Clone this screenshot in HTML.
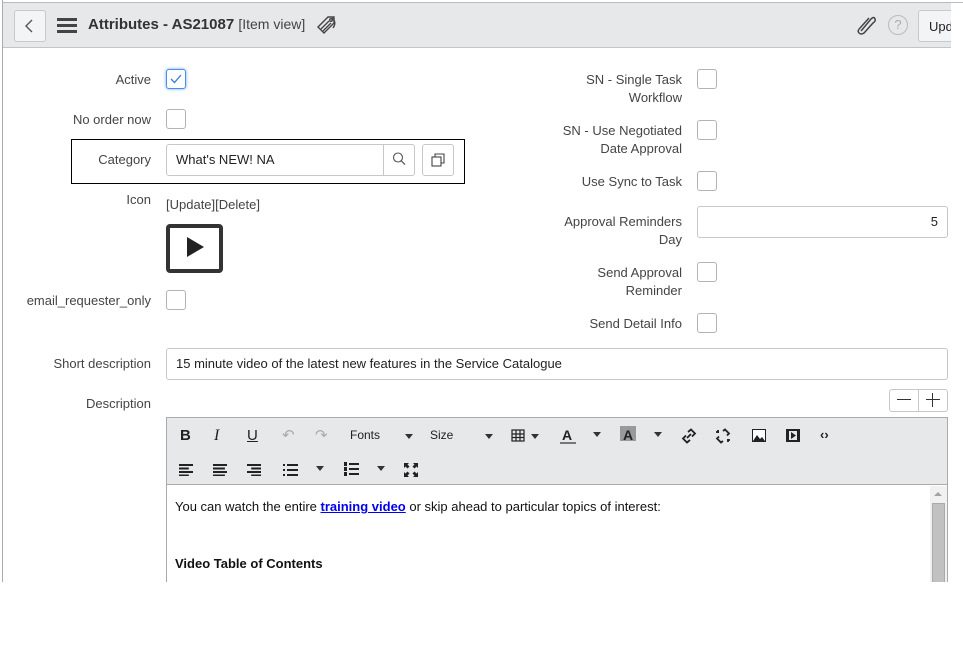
<!DOCTYPE html>
<html><head><meta charset="utf-8"><style>
*{box-sizing:border-box;margin:0;padding:0}
body{width:963px;height:650px;background:#fff;font-family:"Liberation Sans",sans-serif;font-size:13px;color:#333;position:relative;overflow:hidden}
.a{position:absolute}
.lbl{position:absolute;text-align:right;color:#444;font-size:13px;line-height:18px}
.cb{position:absolute;width:20px;height:20px;border:1px solid #b3b3b3;border-radius:3px;background:#fff}
.inp{position:absolute;border:1px solid #c7c7c7;border-radius:3px;background:#fff;color:#222;font-size:13px}
.tb{position:absolute;font-size:13px;color:#222}
.caret{position:absolute;width:0;height:0;border-left:4px solid transparent;border-right:4px solid transparent;border-top:5px solid #333}
.bar{position:absolute;background:#222;height:2px}
</style></head><body>
<!-- frame -->
<div class="a" style="left:2px;top:0;width:1px;height:582px;background:#aaa"></div>
<div class="a" style="left:2px;top:2px;width:961px;height:1px;background:#bbb"></div>
<!-- header -->
<div class="a" style="left:3px;top:3px;width:960px;height:45px;background:#e6e8ea;border-bottom:1px solid #c4c4c4"></div>
<div class="a" style="left:14px;top:10px;width:32px;height:32px;background:#f3f4f5;border:1px solid #c9c9c9;border-radius:3px"></div>
<svg class="a" style="left:22px;top:17px" width="16" height="18"><path d="M10 3 L4 9 L10 15" fill="none" stroke="#555" stroke-width="1.4"/></svg>
<div class="a" style="left:57px;top:18px;width:20px;height:3px;background:#444"></div>
<div class="a" style="left:57px;top:24px;width:20px;height:3px;background:#444"></div>
<div class="a" style="left:57px;top:30px;width:20px;height:3px;background:#444"></div>
<div class="a" style="left:88px;top:16px;font-size:15px;color:#333;white-space:nowrap"><b>Attributes - AS21087</b> <span style="font-size:14px;color:#444">[Item view]</span></div>
<svg class="a" style="left:315px;top:14px" width="24" height="24"><g fill="none" stroke="#444" stroke-width="1.4"><path d="M3 13 L13 3 L19 3 L19 9 L9 19 Z"/><path d="M6 15 L14 7 M8 17 L16 9"/><circle cx="16" cy="6" r="1.3"/><path d="M17 4 Q22 8 18 14"/></g></svg>
<svg class="a" style="left:855px;top:14px" width="22" height="22"><path d="M6 17 L16 5 Q19 2 20 5 Q21 7 18 9 L9 19 Q6 21 4 19 Q2 17 5 14 L14 4" fill="none" stroke="#444" stroke-width="1.5"/></svg>
<div class="a" style="left:888px;top:15px;width:20px;height:20px;border:1px solid #bbb;border-radius:50%;color:#aaa;font-size:13px;text-align:center;line-height:18px">?</div>
<div class="a" style="left:918px;top:10px;width:40px;height:32px;background:#f3f4f5;border:1px solid #c9c9c9;border-radius:3px;padding:8px 0 0 10px;font-size:13px;color:#222">Upd</div>
<div class="a" style="left:951px;top:3px;width:12px;height:46px;background:#fff"></div>

<!-- left column -->
<div class="lbl" style="right:812px;top:71px">Active</div>
<div class="cb" style="left:166px;top:69px;border-color:#4a90e2;box-shadow:0 0 3px #6aa6ff"></div>
<svg class="a" style="left:169px;top:72px" width="14" height="14"><path d="M2 7 L5.5 10.5 L12 3" fill="none" stroke="#3a7bd5" stroke-width="1.3"/></svg>
<div class="lbl" style="right:812px;top:111px">No order now</div>
<div class="cb" style="left:166px;top:109px"></div>
<div class="a" style="left:71px;top:139px;width:394px;height:45px;border:1px solid #000"></div>
<div class="lbl" style="right:812px;top:151px">Category</div>
<div class="inp" style="left:166px;top:144px;width:249px;height:32px;padding:7px 9px">What's NEW! NA</div>
<div class="a" style="left:383px;top:145px;width:1px;height:30px;background:#c7c7c7"></div>
<svg class="a" style="left:391px;top:151px" width="16" height="16"><circle cx="7" cy="6.5" r="4.5" fill="none" stroke="#555" stroke-width="1.1"/><path d="M10.2 9.8 L14 13.6" stroke="#555" stroke-width="1.2"/></svg>
<div class="inp" style="left:422px;top:144px;width:32px;height:32px"></div>
<svg class="a" style="left:430px;top:152px" width="16" height="16"><rect x="2" y="5" width="9" height="9" fill="none" stroke="#444" stroke-width="1.1"/><path d="M5 5 V2 H14 V11 H11" fill="none" stroke="#444" stroke-width="1.1"/></svg>
<div class="lbl" style="right:812px;top:191px">Icon</div>
<div class="a" style="left:166px;top:197px;color:#444">[Update][Delete]</div>
<div class="a" style="left:166px;top:224px;width:57px;height:49px;border:4px solid #333;border-radius:4px"></div>
<div class="a" style="left:187px;top:237px;width:0;height:0;border-top:10px solid transparent;border-bottom:10px solid transparent;border-left:17px solid #222"></div>
<div class="lbl" style="right:812px;top:292px">email_requester_only</div>
<div class="cb" style="left:166px;top:290px"></div>

<!-- right column -->
<div class="lbl" style="right:281px;top:71px">SN - Single Task<br>Workflow</div>
<div class="cb" style="left:697px;top:69px"></div>
<div class="lbl" style="right:281px;top:122px">SN - Use Negotiated<br>Date Approval</div>
<div class="cb" style="left:697px;top:120px"></div>
<div class="lbl" style="right:281px;top:173px">Use Sync to Task</div>
<div class="cb" style="left:697px;top:171px"></div>
<div class="lbl" style="right:281px;top:213px">Approval Reminders<br>Day</div>
<div class="inp" style="left:697px;top:206px;width:251px;height:32px;text-align:right;padding:7px 9px">5</div>
<div class="lbl" style="right:281px;top:264px">Send Approval<br>Reminder</div>
<div class="cb" style="left:697px;top:262px"></div>
<div class="lbl" style="right:281px;top:315px">Send Detail Info</div>
<div class="cb" style="left:697px;top:313px"></div>

<!-- short desc -->
<div class="lbl" style="right:812px;top:355px">Short description</div>
<div class="inp" style="left:166px;top:348px;width:782px;height:32px;padding:7px 9px">15 minute video of the latest new features in the Service Catalogue</div>
<div class="lbl" style="right:812px;top:395px">Description</div>
<div class="inp" style="left:889px;top:389px;width:59px;height:23px"></div>
<div class="a" style="left:918px;top:390px;width:1px;height:21px;background:#c7c7c7"></div>
<div class="a" style="left:897px;top:399px;width:14px;height:1px;background:#333"></div>
<div class="a" style="left:926px;top:399px;width:14px;height:1px;background:#333"></div>
<div class="a" style="left:932px;top:393px;width:1px;height:14px;background:#333"></div>

<!-- editor -->
<div class="a" style="left:166px;top:417px;width:782px;height:170px;border:1px solid #aaa;background:#fff"></div>
<div class="a" style="left:167px;top:418px;width:780px;height:67px;background:#e6e8ea;border-bottom:1px solid #aaa"></div>
<div class="tb" style="left:180px;top:427px;font-weight:bold;font-size:15px">B</div>
<div class="tb" style="left:214px;top:427px;font-style:italic;font-size:16px;font-family:'Liberation Serif',serif">I</div>
<div class="tb" style="left:247px;top:427px;text-decoration:underline;font-size:15px">U</div>
<div class="tb" style="left:282px;top:426px;color:#aaa;font-size:15px">↶</div>
<div class="tb" style="left:315px;top:426px;color:#aaa;font-size:15px">↷</div>
<div class="tb" style="left:350px;top:428px;font-size:12px">Fonts</div>
<div class="caret" style="left:405px;top:434px"></div>
<div class="tb" style="left:430px;top:428px;font-size:12px">Size</div>
<div class="caret" style="left:485px;top:434px"></div>
<svg class="a" style="left:511px;top:429px" width="14" height="13"><g fill="none" stroke="#222" stroke-width="1.2"><rect x="1" y="1" width="12" height="11"/><path d="M1 5H13M1 8.5H13M5 1V12M9 1V12"/></g></svg>
<div class="caret" style="left:531px;top:434px"></div>
<div class="tb" style="left:562px;top:427px;font-weight:bold;font-size:14px">A</div>
<div class="a" style="left:560px;top:442px;width:16px;height:2px;background:#777"></div>
<div class="caret" style="left:593px;top:432px"></div>
<div class="a" style="left:620px;top:426px;width:16px;height:15px;background:#999"></div>
<div class="tb" style="left:623px;top:427px;font-weight:bold;font-size:14px">A</div>
<div class="caret" style="left:654px;top:432px"></div>
<svg class="a" style="left:681px;top:428px" width="16" height="16"><g fill="none" stroke="#222" stroke-width="1.8"><path d="M7 4 L10 1.5 L14 5.5 L11 8.5"/><path d="M9 12 L6 14.5 L2 10.5 L5 7.5"/><path d="M6 10 L10 6"/></g></svg>
<svg class="a" style="left:715px;top:428px" width="16" height="16"><g fill="none" stroke="#222" stroke-width="1.8"><path d="M8 3 L10 1.5 L14 5.5 L12 7.5"/><path d="M8 13 L6 14.5 L2 10.5 L4 8.5"/><path d="M3 2V5M1 4H4M13 11V14M12 12H15"/></g></svg>
<svg class="a" style="left:752px;top:429px" width="14" height="13"><rect x="0.5" y="0.5" width="13" height="12" fill="#fff" stroke="#222"/><path d="M1 12 L5 6 L8 10 L10 8 L13 12Z" fill="#222"/><rect x="1" y="1" width="12" height="5" fill="none"/></svg>
<svg class="a" style="left:786px;top:429px" width="14" height="13"><rect x="0" y="0" width="14" height="13" fill="#222"/><rect x="3" y="2" width="8" height="9" fill="#e6e8ea"/><path d="M5 3 L10 6.5 L5 10Z" fill="#222"/></svg>
<div class="tb" style="left:820px;top:427px;font-size:13px;font-weight:bold">‹›</div>
<!-- row 2 -->
<div class="bar" style="left:179px;top:436px;width:0"></div>
<div class="a" style="left:179px;top:464px;width:14px;height:12px;background:repeating-linear-gradient(#222 0 2px,transparent 2px 3.5px);clip-path:polygon(0 0,100% 0,100% 2px,0 2px,0 3.5px,70% 3.5px,70% 5.5px,0 5.5px,0 7px,100% 7px,100% 9px,0 9px,0 10.5px,70% 10.5px,70% 12px,0 12px)"></div>
<div class="a" style="left:213px;top:464px;width:14px;height:12px;background:repeating-linear-gradient(#222 0 2px,transparent 2px 3.5px);clip-path:polygon(0 0,100% 0,100% 2px,15% 2px,15% 3.5px,85% 3.5px,85% 5.5px,0 5.5px,0 7px,100% 7px,100% 9px,15% 9px,15% 10.5px,85% 10.5px,85% 12px,0 12px)"></div>
<div class="a" style="left:247px;top:464px;width:14px;height:12px;background:repeating-linear-gradient(#222 0 2px,transparent 2px 3.5px);clip-path:polygon(0 0,100% 0,100% 12px,30% 12px,30% 10.5px,100% 10.5px,100% 9px,0 9px,0 7px,100% 7px,100% 5.5px,30% 5.5px,30% 3.5px,100% 3.5px,100% 2px,0 2px)"></div>
<svg class="a" style="left:283px;top:463px" width="16" height="14"><g fill="#222"><rect x="0" y="1" width="2" height="2"/><rect x="4" y="1" width="11" height="2"/><rect x="0" y="6" width="2" height="2"/><rect x="4" y="6" width="11" height="2"/><rect x="0" y="11" width="2" height="2"/><rect x="4" y="11" width="11" height="2"/></g></svg>
<div class="caret" style="left:316px;top:466px"></div>
<svg class="a" style="left:344px;top:462px" width="16" height="15"><g fill="#222"><rect x="0" y="0" width="3" height="4"/><rect x="0" y="5" width="3" height="4"/><rect x="0" y="10" width="3" height="4"/><rect x="5" y="1" width="10" height="2"/><rect x="5" y="6" width="10" height="2"/><rect x="5" y="11" width="10" height="2"/></g></svg>
<div class="caret" style="left:377px;top:466px"></div>
<svg class="a" style="left:404px;top:463px" width="14" height="14"><g fill="#222"><path d="M0 0H5L3.5 1.5 5.5 3.5 3.5 5.5 1.5 3.5 0 5Z"/><path d="M14 0V5L12.5 3.5 10.5 5.5 8.5 3.5 10.5 1.5 9 0Z"/><path d="M0 14V9L1.5 10.5 3.5 8.5 5.5 10.5 3.5 12.5 5 14Z"/><path d="M14 14H9L10.5 12.5 8.5 10.5 10.5 8.5 12.5 10.5 14 9Z"/></g></svg>
<!-- content -->
<div class="a" style="left:175px;top:499px;font-size:13px;color:#111;white-space:nowrap">You can watch the entire <a style="color:#00e;font-weight:bold;text-decoration:underline">training video</a> or skip ahead to particular topics of interest:</div>
<div class="a" style="left:175px;top:556px;font-size:13px;color:#111;font-weight:bold">Video Table of Contents</div>
<div class="a" style="left:930px;top:486px;width:17px;height:101px;background:#f1f1f1"></div>
<div class="a" style="left:934px;top:492px;width:0;height:0;border-left:4px solid transparent;border-right:4px solid transparent;border-bottom:4px solid #a3a3a3"></div>
<div class="a" style="left:932px;top:503px;width:13px;height:84px;background:#c1c1c1;border:1px solid #aaa"></div>
<!-- bottom cut -->
<div class="a" style="left:0;top:582px;width:963px;height:68px;background:#fff"></div>
</body></html>
